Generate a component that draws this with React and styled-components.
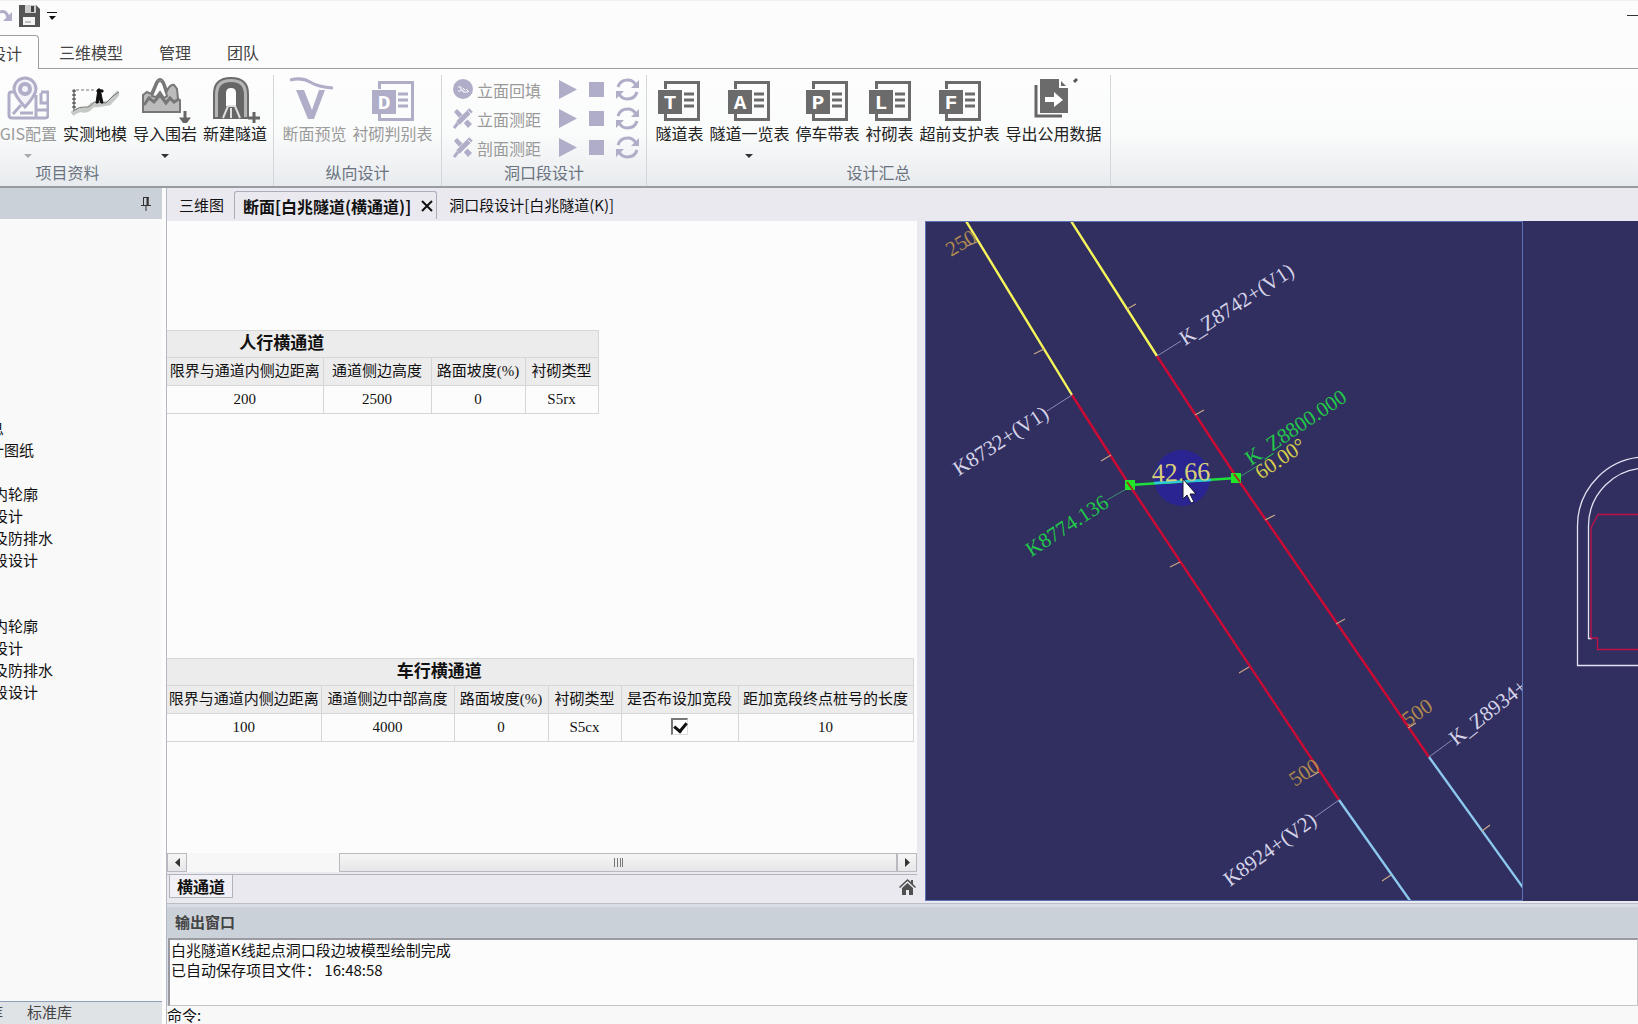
import React from "react"
import styled, { createGlobalStyle } from "styled-components"

const sans = `"Noto Sans CJK SC", "Noto Sans", sans-serif`
const serif = `"Liberation Serif", "Noto Sans CJK SC", serif`
const muted = "#b0adc8"
const dark = "#6b6b6b"

const GlobalStyle = createGlobalStyle`
  * {
    box-sizing: border-box;
  }
  body {
    margin: 0;
    overflow: hidden;
    background: #fcfcfc;
    color: #111;
    font: 15px/20px ${sans};
  }
  button,
  input,
  textarea {
    margin: 0;
    padding: 0;
    border: 0;
    border-radius: 0;
    background: none;
    color: inherit;
    font: inherit;
  }
  svg {
    display: block;
  }
`

const Page = styled.div`
  display: flex;
  flex-direction: column;
  height: 100vh;
`

/* ---------- title bar and ribbon ---------- */

const TitleBar = styled.header`
  display: flex;
  align-items: center;
  gap: 7px;
  height: 35px;
  padding-bottom: 4px;
  border-top: 1px solid #f0f0f0;
  overflow: hidden;
`

const BarButton = styled.button`
  flex: none;
`

const Minimize = styled(BarButton)`
  margin-left: auto;
`

const RibbonTabs = styled.nav`
  display: flex;
  height: 34px;
  border-bottom: 1px solid #9b9ea3;
`

const RibbonTab = styled.button`
  height: 33px;
  padding: 0 18px;
  color: #444;
  font-size: 16px;
  white-space: nowrap;
`

const ActiveRibbonTab = styled(RibbonTab)`
  display: flex;
  align-items: center;
  justify-content: flex-end;
  width: 39px;
  height: 34px;
  margin-right: 2px;
  padding: 0 16px 0 0;
  border: 1px solid #9b9ea3;
  border-width: 1px 1px 0 0;
  border-radius: 0 4px 0 0;
  background: #fdfdfd;
  overflow: hidden;
`

const Ribbon = styled.section`
  display: flex;
  height: 119px;
  padding-top: 6px;
  border-bottom: 2px solid #979ca1;
  background: linear-gradient(#fdfdfd 0%, #fafbfb 55%, #e8ebee 100%);
  overflow: hidden;
`

const Group = styled.div`
  display: flex;
  flex: none;
  flex-direction: column;
  justify-content: space-between;
  width: ${(props) => props.$width}px;
  padding-bottom: 4px;
  border-right: 1px solid #d3d6da;
`

const GroupTitle = styled.div`
  padding-right: ${(props) => props.$cut || 0}px;
  color: #6a7380;
  font-size: 16px;
  text-align: center;
`

const Tools = styled.div`
  display: flex;
  justify-content: ${(props) => (props.$end ? "flex-end" : "center")};
  padding: 0 3px;
`

const Tool = styled.button`
  display: flex;
  flex: none;
  flex-direction: column;
  align-items: center;
  padding: 0 3px;
  color: ${(props) => (props.disabled ? "#9a9a9a" : "#222")};
  font-size: 16px;
  line-height: 20px;
  white-space: nowrap;
`

const Caret = styled.i`
  margin-top: 11px;
  border: 4px solid transparent;
  border-top-color: ${(props) => (props.$dim ? "#aaa" : "#333")};
  border-bottom: 0;
`

const PortalRows = styled.div`
  display: flex;
  flex-direction: column;
  padding-left: 11px;
`

const PortalRow = styled.div`
  display: flex;
  align-items: center;
  height: 29px;
`

const PortalButton = styled.button`
  display: flex;
  align-items: center;
  gap: 3px;
  margin-right: 18px;
  color: #999;
  font-size: 16px;
`

const PortalActions = styled.div`
  display: flex;
  align-items: center;
  gap: 12px;
`

/* ---------- side panel ---------- */

const Body = styled.div`
  display: flex;
  flex: 1;
  min-height: 0;
`

const Side = styled.aside`
  display: flex;
  flex: none;
  flex-direction: column;
  width: 162px;
  background: #f9f9f9;
`

const SideHeader = styled.div`
  display: flex;
  align-items: center;
  justify-content: flex-end;
  height: 31px;
  padding-right: 11px;
  background: #cbd1d8;
`

const Tree = styled.ul`
  flex: 1;
  margin: 0;
  padding: 198px 0 0;
  list-style: none;
`

const TreeItem = styled.li`
  display: flex;
  justify-content: flex-end;
  width: ${(props) => props.$end}px;
  height: 22px;
  line-height: 22px;
  white-space: nowrap;
  overflow: hidden;
`

const SideTabs = styled.div`
  display: flex;
  gap: 24px;
  height: 23px;
  border-top: 1px solid #8d9fbb;
  background: #e0e3e6;
  color: #444;
`

const SideTab = styled.button`
  display: flex;
  justify-content: flex-end;
  width: ${(props) => (props.$width ? `${props.$width}px` : "auto")};
  overflow: hidden;
`

/* ---------- documents ---------- */

const Main = styled.main`
  display: flex;
  flex: 1;
  flex-direction: column;
  min-width: 0;
  margin-left: 4px;
  border-left: 1px solid #b4b8c4;
  background: #eae9f0;
`

const DocTabs = styled.nav`
  display: flex;
  align-items: flex-end;
  height: 33px;
  padding-bottom: 2px;
`

const DocTab = styled.button`
  height: 28px;
  padding: 0 10px 0 12px;
  white-space: nowrap;
`

const ActiveDocTab = styled.div`
  display: flex;
  align-items: center;
  gap: 10px;
  height: 28px;
  padding: 0 3px 0 8px;
  border: 1px solid #a9adba;
  border-bottom: 0;
  border-radius: 3px 3px 0 0;
  font-size: 16px;
  font-weight: bold;
  white-space: nowrap;
`

const Work = styled.div`
  display: grid;
  grid-template-columns: minmax(0, 758fr) minmax(0, 598fr) minmax(0, 115fr);
  flex: 1;
  min-height: 0;
  border-bottom: 1px solid #b9bec9;
`

const SheetPane = styled.section`
  display: flex;
  flex-direction: column;
  min-height: 0;
  margin-right: 8px;
`

const Sheet = styled.div`
  display: flex;
  flex: 1;
  flex-direction: column;
  align-items: flex-start;
  gap: 244px;
  padding-top: 109px;
  background: #fcfcfc;
  overflow: hidden;
`

const Table = styled.table`
  border-collapse: collapse;
  table-layout: fixed;
  width: ${(props) => props.$width}px;
  font-family: ${serif};
  text-align: center;

  tr {
    height: 28px;
  }
  tr:first-child:not(:last-child) {
    height: 27px;
  }
  th,
  td {
    padding: 0 0 2px;
    border: 1px solid #d6d6d6;
    border-left-width: 0;
    font-weight: normal;
    white-space: nowrap;
  }
  th {
    background: #ececec;
  }
`

const TableTitle = styled.th`
  && {
    padding: 0 201px 0 0;
    font-size: 17px;
    font-weight: bold;
  }
`

const Check = styled.input`
  appearance: none;
  display: block;
  width: 17px;
  height: 17px;
  margin: 0 auto;
  border: 1px solid #ddd;
  border-top: 2px solid #777;
  border-left: 2px solid #777;
  background: #fff;

  &:checked::after {
    content: "";
    display: block;
    width: 6px;
    height: 9px;
    margin: 0 auto;
    border: solid #111;
    border-width: 0 3px 3px 0;
    transform: rotate(40deg);
  }
`

const Scrollbar = styled.div`
  display: grid;
  grid-template-columns: 20px 152fr 558fr 20px;
  height: 19px;
  background: #f7f7f8;
`

const ScrollButton = styled.button`
  display: flex;
  align-items: center;
  justify-content: center;
  border: 1px solid #b9b9bf;
  background: linear-gradient(#f6f6f6, #e6e6e8);
`

const SheetTabs = styled.div`
  display: flex;
  align-items: flex-start;
  justify-content: space-between;
  height: 29px;
  margin-top: 2px;
  border-top: 1px solid #b1b4bd;
`

const SheetTab = styled.button`
  height: 23px;
  margin-left: 2px;
  padding: 0 7px;
  border: 1px solid #b1b4bd;
  border-top: 0;
  background: #f1f0f6;
  font-size: 16px;
  font-weight: bold;
  line-height: 20px;
`

const HomeButton = styled.button`
  padding: 4px 1px 0;
`

const View = styled.div`
  min-width: 0;
  min-height: 0;
  margin-bottom: 2px;
  border: 1px solid #5a74b4;
  background: #312f60;
  overflow: hidden;

  svg {
    width: 100%;
    height: 100%;
  }
`

const SectionView = styled(View)`
  border-width: 0;
`

const CadText = styled.text`
  fill: ${(props) => props.$color};
  font: ${(props) => props.$size || 21}px ${serif};
`

/* ---------- output ---------- */

const Output = styled.section`
  display: flex;
  flex-direction: column;
  padding-top: 3px;
  background: #d9dee6;
`

const OutputTitle = styled.label`
  height: 31px;
  padding-left: 8px;
  background: #cbd1d8;
  color: #444;
  font-weight: bold;
  line-height: 30px;
`

const Log = styled.textarea`
  height: 68px;
  margin-left: 1px;
  padding: 0 1px;
  border: 1px solid #c4c4c4;
  border-top: 2px solid #999ba0;
  border-left: 2px solid #999ba0;
  background: #fcfcfc;
  font-family: ${sans};
  resize: none;
  overflow: hidden;
`

const Command = styled.label`
  display: flex;
  height: 18px;
  background: #f8f8f8;
  line-height: 18px;

  input {
    flex: 1;
    outline: 0;
  }
`

/* ---------- icons ---------- */

const IconFrame = ({ width = 42, children }) => (
  <svg width={width} height="48" viewBox={`0 0 ${width} 48`} fill="none">
    {children}
  </svg>
)

const GisIcon = () => (
  <IconFrame>
    <g stroke={muted} strokeWidth="3">
      <path d="M7 17H4q-2 0-2 3v20q0 3 3 3h33q3 0 3-3V17h-7" />
      <path d="M6 39l8-9M13 38h13M29 20v22M34 18v10h7M30 35h10" />
      <path d="M18 32Q7 20 7 14a11 11 0 0 1 22 0q0 6-11 18z" fill="#f3f2f8" />
    </g>
    <circle cx="18" cy="14" r="5" stroke={muted} strokeWidth="4" />
  </IconFrame>
)

const TerrainIcon = () => (
  <IconFrame width={48}>
    <path d="M3 14v25M1 16h4M1 20h4M1 24h4M1 28h4M1 32h4" stroke="#333" />
    <path d="M5 15h20" stroke="#777" strokeDasharray="3 2" />
    <path
      d="M1 39q6-5 11-4t9-5q5 0 10-1l7-1 10-11"
      stroke="#c6cac6"
      strokeWidth="5"
    />
    <path d="M2 36q7-5 12-4t9-5l12 1 7-7 6-4" stroke="#777" />
    <path d="M25 28l2-14h2l3 14h-2l-2-4-1 4zM26 15h6v2h-6z" fill="#111" stroke="#111" />
  </IconFrame>
)

const RockIcon = () => (
  <IconFrame width={54}>
    <path
      d="M5 37V20l4-3 4 2 4-9q2-6 5-6t5 6l2 6q3-7 7-6l3 4 1 10 2 1v12z"
      fill="#bcbcbc"
      stroke="#777"
      strokeWidth="2"
    />
    <path d="M14 21l5-12q3-6 6 0l4 12-3 2-4-6-4 5z" fill="#fff" stroke="#777" strokeWidth="2" />
    <path d="M6 30l5-7 5 4 6-7 6 8 4-5 4 4 5-3" stroke="#777" strokeWidth="3" />
    <path d="M47 36v11M44 44l3 4 3-4z" stroke="#666" strokeWidth="3" />
  </IconFrame>
)

const TunnelIcon = () => (
  <IconFrame width={50}>
    <path d="M4 43V19Q4 3 21 3t17 16v24z" fill="#b5b5b5" stroke="#6b6b6b" strokeWidth="2" />
    <path d="M8 43V20Q8 7 21 7t13 13v23z" fill="#666" />
    <path d="M16 31V18q0-5 5-5t5 5v13z" fill="#fff" />
    <path d="M13 43l5-12h7l5 12M21 33v10" stroke="#ddd" strokeWidth="2" />
    <path d="M44 37v11M38 43h12" stroke="#666" strokeWidth="3" />
  </IconFrame>
)

const ProfileIcon = () => (
  <IconFrame width={48}>
    <path d="M0 5q12-3 20 2t23 6" stroke={muted} strokeWidth="3" />
    <path d="M6 15h8l8 20 7-20h6L24 44h-6z" fill={muted} />
  </IconFrame>
)

const SheetIcon = ({ letter, color = dark }) => (
  <IconFrame>
    <path
      d="M7.5 14V7.500h33v37h-33V39M26 19h10M26 25h10M26 31h10"
      stroke={color}
      strokeWidth="3"
    />
    <path d="M0 15h24v24H0z" fill={color} />
    <text
      x="12"
      y="34"
      textAnchor="middle"
      fill="#fff"
      fontFamily="Liberation Mono"
      fontWeight="bold"
      fontSize="21"
    >
      {letter}
    </text>
  </IconFrame>
)

const ExportIcon = () => (
  <IconFrame width={48}>
    <path d="M6 10v31h26" stroke="#666" strokeWidth="3" />
    <path d="M10 4h19l9 9v25H10z" fill={dark} />
    <path d="M30 3v9h9" stroke="#fff" strokeWidth="2" />
    <path d="M15 22h9v-5l9 8-9 7v-5h-9z" fill="#fff" />
    <path d="M44 7l3-3" stroke="#555" strokeWidth="3" />
  </IconFrame>
)

const BackfillIcon = () => (
  <svg width="21" height="21" viewBox="0 0 21 21">
    <circle cx="10" cy="10" r="10" fill={muted} />
    <path d="M5 8h3v3h2v2h5M5 12h3M10 9l2 2M13 10l3 3" stroke="#fff" fill="none" />
  </svg>
)

const MeasureIcon = () => (
  <svg width="21" height="21" viewBox="0 0 21 21" fill="none" stroke={muted}>
    <path d="M1 4l3-3 15 15-4 4z" fill={muted} stroke="none" />
    <path d="M18 3L4 17" stroke="#f8f8f8" strokeWidth="7" />
    <path d="M18 2L5 15" strokeWidth="5" />
    <path d="M5 15l-4 5" strokeWidth="3" />
    <path d="M15 3l3 3" stroke="#f8f8f8" />
  </svg>
)

const PlayIcon = () => (
  <svg width="18" height="19" viewBox="0 0 18 19">
    <path d="M0 0l18 9.500L0 19z" fill={muted} />
  </svg>
)

const StopIcon = () => (
  <svg width="15" height="15" viewBox="0 0 15 15">
    <path d="M0 0h15v15H0z" fill={muted} />
  </svg>
)

const RefreshIcon = () => (
  <svg width="23" height="23" viewBox="0 0 23 23" fill="none">
    <path d="M2 9Q4 2 12 2q5 0 8 5M21 14q-2 7-10 7-5 0-8-5" stroke={muted} strokeWidth="3" />
    <path d="M23 2v8h-8zM0 21v-8h8z" fill={muted} />
  </svg>
)

const RedoIcon = () => (
  <svg width="12" height="16" viewBox="0 0 12 16" fill="none">
    <path d="M0 4q7-2 8 6" stroke={muted} strokeWidth="3" />
    <path d="M12 4v9H3z" fill={muted} />
  </svg>
)

const SaveIcon = () => (
  <svg width="21" height="22" viewBox="0 0 21 22">
    <path d="M0 0h17l4 4v18H0z" fill="#555" />
    <path d="M6 0h11v8H6z" fill="#ccc" />
    <path d="M12 1h3v6h-3z" fill="#444" />
    <path d="M4 12h12v8H4z" fill="#f4f4f4" />
    <path d="M6 17h6" stroke="#888" />
  </svg>
)

const PinIcon = () => (
  <svg width="10" height="14" viewBox="0 0 10 14" fill="none" stroke="#333">
    <path d="M2.500 0v8M7 0v8M2 .5h6M0 8.500h10M5 9v5" />
    <path d="M6.500 0v8" strokeWidth="2" />
  </svg>
)

const HomeIcon = () => (
  <svg width="17" height="16" viewBox="0 0 17 16" fill="#505050">
    <path d="M8.500 0L0 8l1 1 7.500-7L16 9l1-1-3-3V1h-2v2z" />
    <path d="M3 9l5.500-5L14 9v7h-4v-5H7v5H3z" />
  </svg>
)

/* ---------- data ---------- */

const treeItems = [
  ["息", 4],
  ["计图纸", 34],
  ["", 0],
  ["内轮廓", 38],
  ["设计", 23],
  ["及防排水", 53],
  ["段设计", 38],
  ["", 0],
  ["", 0],
  ["内轮廓", 38],
  ["设计", 23],
  ["及防排水", 53],
  ["段设计", 38],
]

const portalRows = [
  ["立面回填", BackfillIcon],
  ["立面测距", MeasureIcon],
  ["剖面测距", MeasureIcon],
]

const summaryTools = [
  ["隧道表", "T"],
  ["隧道一览表", "A"],
  ["停车带表", "P"],
  ["衬砌表", "L"],
  ["超前支护表", "F"],
]

const walkway = {
  title: "人行横通道",
  columns: [
    ["限界与通道内侧边距离", 156],
    ["通道侧边高度", 108],
    ["路面坡度(%)", 94],
    ["衬砌类型", 73],
  ],
  cells: ["200", "2500", "0", "S5rx"],
}

const roadway = {
  title: "车行横通道",
  columns: [
    ["限界与通道内侧边距离", 154],
    ["通道侧边中部高度", 133],
    ["路面坡度(%)", 94],
    ["衬砌类型", 73],
    ["是否布设加宽段", 117],
    ["距加宽段终点桩号的长度", 175],
  ],
  cells: ["100", "4000", "0", "S5cx", true, "10"],
}

const ticks = [
  "M967 246L977 242M1034 354L1044 349M1101 461L1111 455M1170 567L1180 562",
  "M1239 673L1249 667M1310 777L1319 772M1382 881L1391 875",
  "M1127 309L1136 304M1195 415L1204 410M1265 520L1275 515M1336 624L1345 619",
  "M1408 728L1416 723M1482 831L1490 825",
].join("")

const white = "#d5d3e8"
const green = "#22c84a"
const ochre = "#b08a4c"

const labels = [
  { x: 951, y: 257, angle: -31, color: ochre, text: "250" },
  { x: 1295, y: 787, angle: -34, color: ochre, text: "500" },
  { x: 1408, y: 727, angle: -34, color: ochre, text: "500" },
  { x: 1185, y: 346, angle: -33, color: white, text: "K_Z8742+(V1)" },
  { x: 1050, y: 417, angle: -33, color: white, text: "K8732+(V1)", anchor: "end" },
  { x: 1110, y: 506, angle: -33, color: green, text: "K8774.136", anchor: "end" },
  { x: 1251, y: 466, angle: -34, color: green, text: "K_Z8800.000" },
  { x: 1261, y: 480, angle: -34, color: "#d6cc4c", text: "60.00°" },
  { x: 1318, y: 823, angle: -36, color: white, text: "K8924+(V2)", anchor: "end" },
  { x: 1456, y: 746, angle: -38, color: white, text: "K_Z8934+(V2)" },
]

/* ---------- parts ---------- */

const DataTable = ({ table }) => (
  <Table $width={table.columns.reduce((sum, [, width]) => sum + width, 0)}>
    <colgroup>
      {table.columns.map(([name, width]) => (
        <col key={name} width={width} />
      ))}
    </colgroup>
    <thead>
      <tr>
        <TableTitle colSpan={table.columns.length}>{table.title}</TableTitle>
      </tr>
      <tr>
        {table.columns.map(([name]) => (
          <th key={name}>{name}</th>
        ))}
      </tr>
    </thead>
    <tbody>
      <tr>
        {table.cells.map((cell, i) => (
          <td key={i}>
            {cell === true ? (
              <Check type="checkbox" defaultChecked aria-label={table.columns[i][0]} />
            ) : (
              cell
            )}
          </td>
        ))}
      </tr>
    </tbody>
  </Table>
)

const PlanDrawing = () => (
  <svg viewBox="926 222 596 678" preserveAspectRatio="xMinYMin slice" fill="none">
    <circle cx="1182" cy="478" r="28" fill="#2a2392" />
    <g strokeWidth="2.4">
      <path d="M966 221L1072 395M1071 221L1157 356" stroke="#f6f65a" />
      <path d="M1072 395L1130 486L1339 800M1157 356L1237 478L1429 757" stroke="#cc0a34" />
      <path d="M1339 800L1411 902M1429 757L1524 889" stroke="#8cc8ee" />
      <path d="M1130 485L1237 478" stroke="#1ee03c" />
      <path d="M1154 483L1211 480" stroke="#2cc8dc" />
    </g>
    <path d={ticks} stroke="#c8a484" strokeWidth="1.3" />
    <path
      d="M1157 356L1181 341M1072 395L1047 411M1339 800L1315 817M1429 757L1452 740"
      stroke="#8d8ab4"
    />
    <path d="M1128 488L1107 500M1238 478L1262 463" stroke="#3f8f70" />
    <path d="M1125 480h10v10h-10zM1231 473h10v10h-10z" fill="#22e628" />
    <path d="M1127 482L1133 490M1234 474L1240 482" stroke="#a03020" strokeWidth="2" />
    {labels.map((label) => (
      <CadText
        key={`${label.text}${label.x}`}
        $color={label.color}
        textAnchor={label.anchor}
        transform={`translate(${label.x} ${label.y}) rotate(${label.angle})`}
      >
        {label.text}
      </CadText>
    ))}
    <CadText $color="#d8cf78" $size={26} x="1152" y="482" transform="rotate(-2 1152 482)">
      42.66
    </CadText>
    <path
      d="M1183 479v20l4-4 4 8 3-1-4-8h6z"
      fill="#fff"
      stroke="#181830"
    />
  </svg>
)

const SectionDrawing = () => (
  <svg viewBox="1523 221 115 680" preserveAspectRatio="xMinYMin slice" fill="none">
    <path
      d="M1638 665.500H1577.500V526A69 69 0 0 1 1646.500 457"
      stroke="#e4e2f0"
      strokeWidth="1.3"
    />
    <path
      d="M1592 638.500H1588.500V526A58 58 0 0 1 1646.500 468"
      stroke="#e4e2f0"
      strokeWidth="1.3"
    />
    <path
      d="M1638 514.500H1598L1591 528V638H1597.500V649.500H1638"
      stroke="#c01048"
      strokeWidth="1.3"
    />
  </svg>
)

const App = () => (
  <Page>
    <GlobalStyle />
    <TitleBar>
      <BarButton aria-label="重做">
        <RedoIcon />
      </BarButton>
      <BarButton aria-label="保存">
        <SaveIcon />
      </BarButton>
      <BarButton aria-label="更多">
        <svg width="10" height="9" viewBox="0 0 10 9">
          <path d="M0 0h10v1H0zM2 4h7L5 8z" fill="#111" />
        </svg>
      </BarButton>
      <Minimize aria-label="最小化">
        <svg width="12" height="2" viewBox="0 0 12 2">
          <path d="M1 0h11v1H1z" fill="#333" />
        </svg>
      </Minimize>
    </TitleBar>
    <RibbonTabs>
      <ActiveRibbonTab>设计</ActiveRibbonTab>
      <RibbonTab>三维模型</RibbonTab>
      <RibbonTab>管理</RibbonTab>
      <RibbonTab>团队</RibbonTab>
    </RibbonTabs>
    <Ribbon>
      <Group $width={274}>
        <Tools $end>
          <Tool disabled>
            <GisIcon />
            GIS配置
            <Caret $dim />
          </Tool>
          <Tool>
            <TerrainIcon />
            实测地模
          </Tool>
          <Tool>
            <RockIcon />
            导入围岩
            <Caret />
          </Tool>
          <Tool>
            <TunnelIcon />
            新建隧道
          </Tool>
        </Tools>
        <GroupTitle $cut={138}>项目资料</GroupTitle>
      </Group>
      <Group $width={168}>
        <Tools>
          <Tool disabled>
            <ProfileIcon />
            断面预览
          </Tool>
          <Tool disabled>
            <SheetIcon letter="D" color={muted} />
            衬砌判别表
          </Tool>
        </Tools>
        <GroupTitle>纵向设计</GroupTitle>
      </Group>
      <Group $width={205}>
        <PortalRows>
          {portalRows.map(([name, Icon]) => (
            <PortalRow key={name}>
              <PortalButton disabled>
                <Icon />
                {name}
              </PortalButton>
              <PortalActions>
                <button disabled aria-label={`${name} 开始`}>
                  <PlayIcon />
                </button>
                <button disabled aria-label={`${name} 停止`}>
                  <StopIcon />
                </button>
                <button disabled aria-label={`${name} 刷新`}>
                  <RefreshIcon />
                </button>
              </PortalActions>
            </PortalRow>
          ))}
        </PortalRows>
        <GroupTitle>洞口段设计</GroupTitle>
      </Group>
      <Group $width={464}>
        <Tools>
          {summaryTools.map(([name, letter]) => (
            <Tool key={name}>
              <SheetIcon letter={letter} />
              {name}
              {letter === "A" && <Caret />}
            </Tool>
          ))}
          <Tool>
            <ExportIcon />
            导出公用数据
          </Tool>
        </Tools>
        <GroupTitle>设计汇总</GroupTitle>
      </Group>
    </Ribbon>
    <Body>
      <Side>
        <SideHeader>
          <button aria-label="固定">
            <PinIcon />
          </button>
        </SideHeader>
        <Tree>
          {treeItems.map(([name, end], i) => (
            <TreeItem key={i} $end={end}>
              {name}
            </TreeItem>
          ))}
        </Tree>
        <SideTabs>
          <SideTab $width={3}>库</SideTab>
          <SideTab>标准库</SideTab>
        </SideTabs>
      </Side>
      <Main>
        <DocTabs>
          <DocTab>三维图</DocTab>
          <ActiveDocTab>
            <button>断面[白兆隧道(横通道)]</button>
            <button aria-label="关闭">
              <svg width="12" height="12" viewBox="0 0 12 12">
                <path d="M1 1l10 10M11 1L1 11" stroke="#111" strokeWidth="2" />
              </svg>
            </button>
          </ActiveDocTab>
          <DocTab>洞口段设计[白兆隧道(K)]</DocTab>
        </DocTabs>
        <Work>
          <SheetPane>
            <Sheet>
              <DataTable table={walkway} />
              <DataTable table={roadway} />
            </Sheet>
            <Scrollbar>
              <ScrollButton aria-label="向左">
                <svg width="5" height="9" viewBox="0 0 5 9">
                  <path d="M5 0v9L0 4.500z" fill="#333" />
                </svg>
              </ScrollButton>
              <span />
              <ScrollButton aria-label="滚动">
                <svg width="9" height="9" viewBox="0 0 9 9">
                  <path d="M.5 0v9M3.500 0v9M6.500 0v9M8.500 0v9" stroke="#777" />
                </svg>
              </ScrollButton>
              <ScrollButton aria-label="向右">
                <svg width="5" height="9" viewBox="0 0 5 9">
                  <path d="M0 0v9l5-4.500z" fill="#333" />
                </svg>
              </ScrollButton>
            </Scrollbar>
            <SheetTabs>
              <SheetTab>横通道</SheetTab>
              <HomeButton aria-label="主页">
                <HomeIcon />
              </HomeButton>
            </SheetTabs>
          </SheetPane>
          <View>
            <PlanDrawing />
          </View>
          <SectionView>
            <SectionDrawing />
          </SectionView>
        </Work>
        <Output>
          <OutputTitle htmlFor="log">输出窗口</OutputTitle>
          <Log
            id="log"
            readOnly
            defaultValue={"白兆隧道K线起点洞口段边坡模型绘制完成\n已自动保存项目文件： 16:48:58"}
          />
        </Output>
        <Command>
          命令:
          <input type="text" />
        </Command>
      </Main>
    </Body>
  </Page>
)

export default App
